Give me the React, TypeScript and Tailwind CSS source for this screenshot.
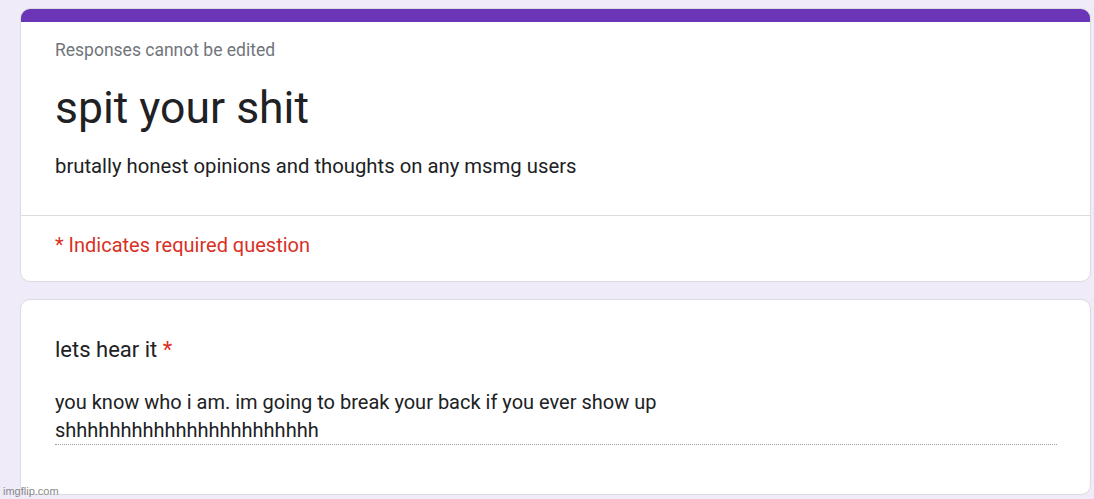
export default function App() {
    return (
        <div className="h-[499px] w-[1094px] overflow-hidden bg-[#efebf8] pt-[8px] pl-[20px] pr-[3px] relative font-['Roboto',sans-serif]">
            <div className="flex flex-col gap-[17px]">
                <div className="rounded-[10px] bg-white border border-[#dadce0] overflow-hidden">
                    <div className="h-[14px] bg-[#6a35b6] -mx-px -mt-px" />
                    <div className="pl-[34px] pr-6 pt-[17px] pb-[36px]">
                        <div className="text-[17.5px] text-[#70757a] leading-[22px]">Responses cannot be edited</div>
                        <h1 className="text-[44.5px] text-[#202124] leading-[52px] mt-[21px]">spit your shit</h1>
                        <p className="text-[20.3px] text-[#202124] leading-[26px] mt-[19px]">
                            brutally honest opinions and thoughts on any msmg users
                        </p>
                    </div>
                    <div className="border-t border-[#dadce0] pl-[34px] pt-[17px] pb-[22px]">
                        <span className="text-[20px] text-[#d93025] leading-[24px]">* Indicates required question</span>
                    </div>
                </div>
                <div className="rounded-[10px] bg-white border border-[#dadce0] h-[196px] pl-[34px] pr-[33px] pt-[36px]">
                    <div className="text-[22px] text-[#202124] leading-[28px]">
                        lets hear it <span className="text-[#d93025]">*</span>
                    </div>
                    <div className="mt-[24px] text-[20px] text-[#202124] leading-[28px] border-b border-dotted border-[#9aa0a6]">
                        you know who i am. im going to break your back if you ever show up
                        <br />
                        shhhhhhhhhhhhhhhhhhhhhhh
                    </div>
                </div>
            </div>
            <div className="absolute left-[3px] bottom-[2px] text-[11px] text-[#8a8a8a] font-['Liberation_Sans',sans-serif] leading-[12px]">
                imgflip.com
            </div>
        </div>
    );
}
